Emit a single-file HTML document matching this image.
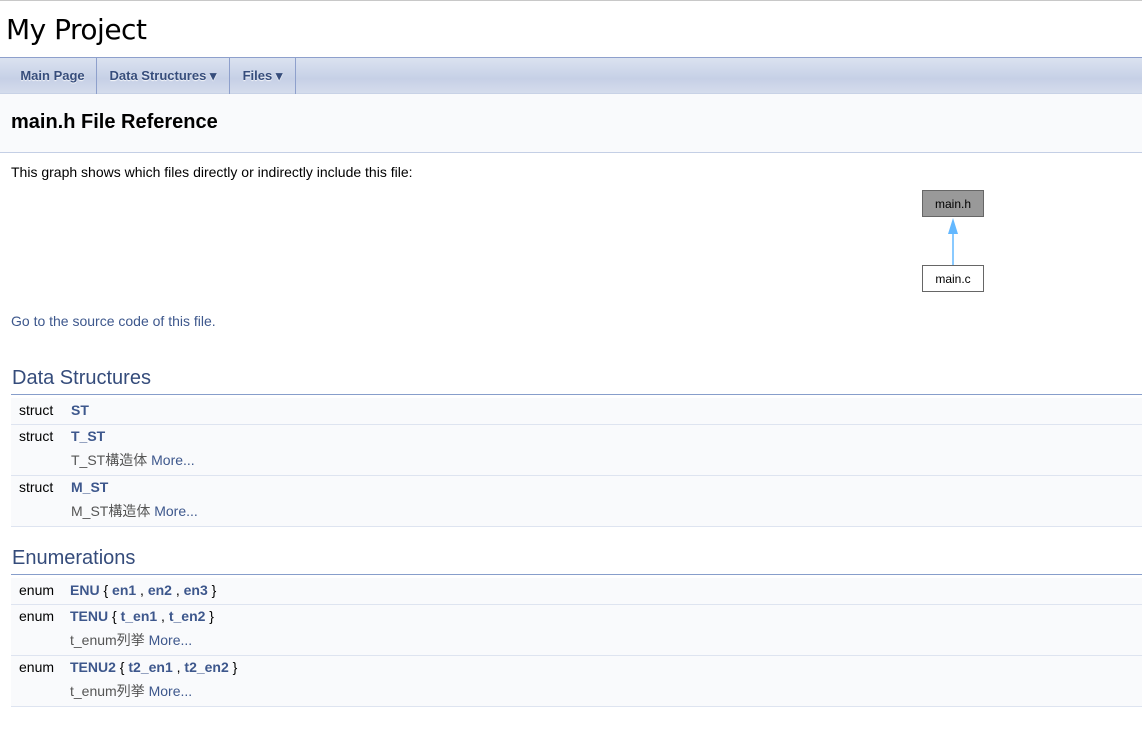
<!DOCTYPE html>
<html><head><meta charset="utf-8"><style>
*{margin:0;padding:0;box-sizing:border-box}
body{width:1142px;height:736px;overflow:hidden;background:#fff;position:relative;font-family:"Liberation Sans","Noto Sans CJK JP",sans-serif;font-size:14px;color:#000}
.a{position:absolute;white-space:nowrap}
#top{position:absolute;left:0;top:0;width:1142px;height:57px;border-top:1px solid #c8c8c8}
#nav{position:absolute;left:0;top:57px;width:1142px;height:37px;background:linear-gradient(#dbe2f0,#c6d0e6 60%,#d4dcec);border-top:1px solid #8ea0cc;border-bottom:1px solid #c8d2e6}
.tab{position:absolute;top:0;height:36px;line-height:35px;font-weight:bold;font-size:13px;color:#364d7c;text-align:center;border-right:1px solid #8ea0cc;text-shadow:0 1px 1px rgba(255,255,255,.9)}
#hd{position:absolute;left:0;top:94px;width:1142px;height:59px;background:#f9fafc;border-bottom:1px solid #c4cfe5}
.lnk{color:#3d578c}
.b{font-weight:bold;color:#3d578c}
.h2{font-size:20px;color:#354c7b}
.hl{position:absolute;left:11px;width:1131px;height:1px;background:#879ecb}
.row{position:absolute;left:11px;width:1131px;background:#f9fafc;border-bottom:1px solid #dee4f0}
.desc{color:#555}
</style></head><body>
<div id="top"><div class="a" style="left:6px;top:12px;font-size:28px;font-family:'DejaVu Sans','Liberation Sans',sans-serif;letter-spacing:-0.5px">My Project</div></div>
<div id="nav">
<div class="tab" style="left:9px;width:88px">Main Page</div>
<div class="tab" style="left:97px;width:133px">Data Structures ▾</div>
<div class="tab" style="left:230px;width:66px">Files ▾</div>
</div>
<div id="hd"><div class="a" style="left:11px;top:17px;font-size:20px;font-weight:bold">main.h File Reference</div></div>
<div class="a" style="left:11px;top:164px">This graph shows which files directly or indirectly include this file:</div>
<svg class="a" style="left:900px;top:180px" width="100" height="120">
<rect x="22.5" y="10.5" width="61" height="26" fill="#999" stroke="#666"/>
<text x="53" y="28" font-size="12" text-anchor="middle" font-family="Liberation Sans, sans-serif">main.h</text>
<rect x="22.5" y="85.5" width="61" height="26" fill="#fff" stroke="#666"/>
<text x="53" y="103" font-size="12" text-anchor="middle" font-family="Liberation Sans, sans-serif">main.c</text>
<line x1="53" y1="85" x2="53" y2="52" stroke="#63b8ff" stroke-width="1.5"/>
<polygon points="53,38 48,54 58,54" fill="#63b8ff"/>
</svg>
<div class="a lnk" style="left:11px;top:313px">Go to the source code of this file.</div>

<div class="a h2" style="left:12px;top:367px">Data Structures</div>
<div class="hl" style="top:394px"></div>
<div class="row" style="top:398px;height:27px"><span class="a" style="left:8px;top:4px">struct</span><span class="a b" style="left:60px;top:4px">ST</span></div>
<div class="row" style="top:425px;height:51px"><span class="a" style="left:8px;top:3px">struct</span><span class="a b" style="left:60px;top:3px">T_ST</span><span class="a desc" style="left:60px;top:25px">T_ST構造体 <span class="lnk">More...</span></span></div>
<div class="row" style="top:476px;height:51px"><span class="a" style="left:8px;top:3px">struct</span><span class="a b" style="left:60px;top:3px">M_ST</span><span class="a desc" style="left:60px;top:25px">M_ST構造体 <span class="lnk">More...</span></span></div>

<div class="a h2" style="left:12px;top:547px">Enumerations</div>
<div class="hl" style="top:574px"></div>
<div class="row" style="top:578px;height:27px"><span class="a" style="left:8px;top:4px">enum</span><span class="a" style="left:59px;top:4px"><span class="b">ENU</span> { <span class="b">en1</span> , <span class="b">en2</span> , <span class="b">en3</span> }</span></div>
<div class="row" style="top:605px;height:51px"><span class="a" style="left:8px;top:3px">enum</span><span class="a" style="left:59px;top:3px"><span class="b">TENU</span> { <span class="b">t_en1</span> , <span class="b">t_en2</span> }</span><span class="a desc" style="left:59px;top:25px">t_enum列挙 <span class="lnk">More...</span></span></div>
<div class="row" style="top:656px;height:51px"><span class="a" style="left:8px;top:3px">enum</span><span class="a" style="left:59px;top:3px"><span class="b">TENU2</span> { <span class="b">t2_en1</span> , <span class="b">t2_en2</span> }</span><span class="a desc" style="left:59px;top:25px">t_enum列挙 <span class="lnk">More...</span></span></div>
</body></html>
